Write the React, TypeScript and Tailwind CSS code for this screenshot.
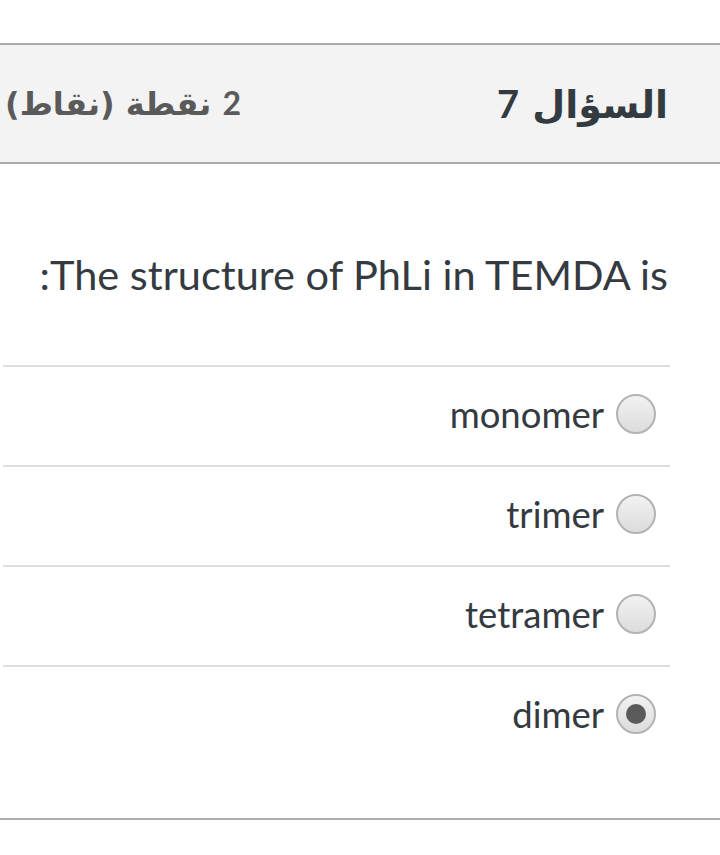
import React from "react";

const options = [
  { label: "monomer", checked: false },
  { label: "trimer", checked: false },
  { label: "tetramer", checked: false },
  { label: "dimer", checked: true },
];

function Radio({ checked }: { checked: boolean }) {
  return (
    <span className="flex h-[40px] w-[40px] shrink-0 items-center justify-center rounded-full border-2 border-[#b3b3b3] bg-gradient-to-b from-[#f2f2f2] to-[#dcdcdc]">
      {checked && <span className="block h-[20px] w-[20px] rounded-full bg-[#5a5a5a]" />}
    </span>
  );
}

export default function App() {
  return (
    <div dir="rtl" className="min-h-screen w-full bg-white text-[#343a3f]">
      <div className="h-[43px]" />
      <div className="flex h-[121px] items-center justify-between border-y-2 border-[#ababab] bg-[#f3f3f3] pl-[5px] pr-[52px] font-['DejaVu_Sans',sans-serif]">
        <div className="text-[38px] font-bold leading-none text-[#333b40]">
          السؤال <span className="font-['Lato','DejaVu_Sans',sans-serif]">7</span>
        </div>
        <div className="text-[32px] font-bold leading-none text-[#5a5a5a]">
          <span className="font-['Lato','DejaVu_Sans',sans-serif]">2</span> نقطة (نقاط)
        </div>
      </div>
      <div className="pr-[52px] pt-[87px] font-['Lato',sans-serif] text-[41.5px] leading-[46px]">
        The structure of PhLi in TEMDA is:
      </div>
      <div className="ml-[3px] mr-[50px] mt-[68px] font-['Lato',sans-serif]">
        {options.map((o) => (
          <div
            key={o.label}
            className="flex h-[100px] items-center gap-[12px] border-t-2 border-[#dedede] pb-[4px] pr-[14px]"
          >
            <Radio checked={o.checked} />
            <span className="text-[36.5px] leading-none">{o.label}</span>
          </div>
        ))}
      </div>
      <div className="mt-[53px] border-t-2 border-[#ababab]" />
    </div>
  );
}
